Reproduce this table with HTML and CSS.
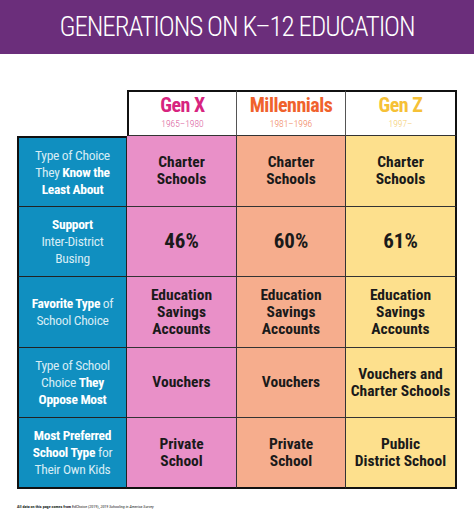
FILE: index.html
```html
<!DOCTYPE html>
<html lang="en">
<head>
  <meta charset="UTF-8" />
  <meta name="viewport" content="width=device-width, initial-scale=1.0" />
  <title>Generations on K-12 Education</title>
  <link rel="stylesheet" href="styles.css">
</head>
<body>
  <header class="banner">
    <h1>GENERATIONS ON K&ndash;12 EDUCATION</h1>
  </header>

  <div class="chart">
    <div class="corner"></div>
    <div class="gen gen-x">
      <span class="gen-name">Gen X</span>
      <span class="gen-years">1965&ndash;1980</span>
    </div>
    <div class="gen gen-m">
      <span class="gen-name">Millennials</span>
      <span class="gen-years">1981&ndash;1996</span>
    </div>
    <div class="gen gen-z last">
      <span class="gen-name">Gen Z</span>
      <span class="gen-years">1997&ndash;</span>
    </div>

    <!-- row 1 -->
    <div class="label first"><span>Type of Choice<br>They <b>Know the<br>Least About</b></span></div>
    <div class="cell pink"><span>Charter<br>Schools</span></div>
    <div class="cell salmon"><span>Charter<br>Schools</span></div>
    <div class="cell yellow last"><span>Charter<br>Schools</span></div>

    <!-- row 2 -->
    <div class="label"><span><b>Support</b><br>Inter-District<br>Busing</span></div>
    <div class="cell pink big"><span>46%</span></div>
    <div class="cell salmon big"><span>60%</span></div>
    <div class="cell yellow big last"><span>61%</span></div>

    <!-- row 3 -->
    <div class="label"><span><b>Favorite Type</b> of<br>School Choice</span></div>
    <div class="cell pink"><span>Education<br>Savings<br>Accounts</span></div>
    <div class="cell salmon"><span>Education<br>Savings<br>Accounts</span></div>
    <div class="cell yellow last"><span>Education<br>Savings<br>Accounts</span></div>

    <!-- row 4 -->
    <div class="label"><span>Type of School<br>Choice <b>They<br>Oppose Most</b></span></div>
    <div class="cell pink"><span>Vouchers</span></div>
    <div class="cell salmon"><span>Vouchers</span></div>
    <div class="cell yellow last"><span>Vouchers and<br>Charter Schools</span></div>

    <!-- row 5 -->
    <div class="label bottom"><span><b>Most Preferred<br>School Type</b> for<br>Their Own Kids</span></div>
    <div class="cell pink bottom"><span>Private<br>School</span></div>
    <div class="cell salmon bottom"><span>Private<br>School</span></div>
    <div class="cell yellow bottom last"><span>Public<br>District School</span></div>
  </div>

  <p class="source"><b>All data on this page comes from</b> EdChoice (2019), <i>2019 Schooling in America Survey</i></p>
</body>
</html>
```

FILE: styles.css
```css
body {
  margin: 0;
  background: #fff;
  font-family: "Roboto Condensed", "Open Sans Condensed", Roboto, sans-serif;
  font-stretch: 75%;
  color: #1a1a1a;
}

.banner {
  background-color: #6b2e7b;
  height: 54px;
  display: flex;
  align-items: center;
  justify-content: center;
}

.banner h1 {
  margin: 0;
  color: #fff;
  font-weight: 300;
  font-size: 27px;
  letter-spacing: -1.1px;
}

.chart {
  display: grid;
  grid-template-columns: 110px 110px 109px 111px;
  grid-template-rows: 46px 71px 70px 71px 70px 71px;
  margin: 36px 0 0 17px;
  width: 441px;
}

.chart > div {
  box-sizing: border-box;
  display: flex;
  flex-direction: column;
  align-items: center;
  justify-content: center;
  text-align: center;
}

.corner {
  background: #fff;
}

.chart > .gen {
  background: #fff;
  border-top: 2px solid #111;
  border-right: 1px solid #555;
  border-bottom: 1px solid #333;
  justify-content: flex-start;
  padding-top: 2px;
}

.gen-x {
  border-left: 2px solid #111;
}

.gen-name {
  font-weight: bold;
  font-size: 20px;
  line-height: 23.5px;
  letter-spacing: -0.5px;
}

.gen-years {
  font-size: 9.5px;
  line-height: 11.2px;
  font-weight: 300;
}

.gen-x .gen-name { color: #d7247f; }
.gen-x .gen-years { color: #d9579a; }
.gen-m .gen-name { color: #f0622c; }
.gen-m .gen-years { color: #ef7c52; }
.gen-z .gen-name { color: #f6c137; }
.gen-z .gen-years { color: #f4cd6c; }

.label {
  background-color: #108fc0;
  color: #d6ecf5;
  font-size: 13.5px;
  line-height: 17px;
  letter-spacing: -0.3px;
  border-left: 2px solid #111;
  border-right: 1px solid #222;
  border-bottom: 1px solid #222;
}

.label b {
  color: #fff;
}

.label.first {
  border-top: 2px solid #111;
}

.cell {
  font-weight: bold;
  font-size: 15.5px;
  line-height: 17px;
  color: #1a1a1a;
  border-right: 1px solid #333;
  border-bottom: 1px solid #333;
}

.cell.big {
  font-size: 21px;
}

.pink { background-color: #e990c8; }
.salmon { background-color: #f6ad8d; }
.yellow { background-color: #fde08d; }

.chart > .last {
  border-right: 2px solid #111;
}

.chart > .bottom {
  border-bottom: 2px solid #111;
}

.source {
  margin: 15px 0 0 17px;
  font-size: 4.1px;
  color: #222;
}
```
